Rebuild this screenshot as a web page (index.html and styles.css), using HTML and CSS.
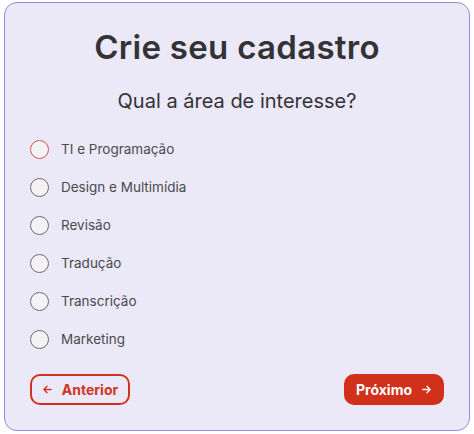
FILE: index.html
```html
<!DOCTYPE html>
<html lang="pt-BR">
<head>
<meta charset="utf-8">
<link rel="stylesheet" href="styles.css">
</head>
<body>
<main class="card">
  <h1 class="title">Crie seu cadastro</h1>
  <h2 class="subtitle">Qual a área de interesse?</h2>
  <ul class="options">
    <li class="option"><span class="radio radio-active"></span><span class="label">TI e Programação</span></li>
    <li class="option"><span class="radio"></span><span class="label">Design e Multimídia</span></li>
    <li class="option"><span class="radio"></span><span class="label">Revisão</span></li>
    <li class="option"><span class="radio"></span><span class="label">Tradução</span></li>
    <li class="option"><span class="radio"></span><span class="label">Transcrição</span></li>
    <li class="option"><span class="radio"></span><span class="label">Marketing</span></li>
  </ul>
  <div class="actions">
    <button class="btn btn-outline"><svg class="arrow" viewBox="0 0 12 12" width="11" height="11"><path d="M10 6H2M5.5 2.5L2 6l3.5 3.5" fill="none" stroke="currentColor" stroke-width="1.4" stroke-linecap="round" stroke-linejoin="round"/></svg>Anterior</button>
    <button class="btn btn-fill">Próximo<svg class="arrow" viewBox="0 0 12 12" width="11" height="11"><path d="M2 6h8M6.5 2.5L10 6l-3.5 3.5" fill="none" stroke="currentColor" stroke-width="1.4" stroke-linecap="round" stroke-linejoin="round"/></svg></button>
  </div>
</main>
</body>
</html>
```
FILE: styles.css
```css
* { box-sizing: border-box; }
html, body { margin: 0; padding: 0; background: #ffffff; }
body {
  font-family: Inter, "Noto Sans", "Liberation Sans", sans-serif;
  color: #3a3a3c;
  width: 474px;
  height: 434px;
  padding: 2px 4px 3px 4px;
}
.card {
  height: 429px;
  border: 1.5px solid #8f8ce0;
  border-radius: 13px;
  background: #ebe9f8;
  padding: 0 25px 0 25px;
  display: flex;
  flex-direction: column;
}
.title {
  margin: 26px 0 0 0;
  text-align: center;
  font-size: 33px;
  font-weight: 600;
  line-height: 36px;
  color: #333336;
  letter-spacing: 0.3px;
}
.subtitle {
  margin: 24px 0 0 0;
  text-align: center;
  font-size: 20px;
  font-weight: 400;
  line-height: 24px;
  color: #333336;
}
.options {
  list-style: none;
  margin: 26px 0 0 0;
  padding: 0;
  display: flex;
  flex-direction: column;
  gap: 18px;
}
.option {
  display: flex;
  align-items: center;
  gap: 12px;
  height: 20px;
}
.radio {
  width: 19px;
  height: 19px;
  border-radius: 50%;
  border: 1.5px solid #6d6b70;
  background: #f4f2f5;
  flex: none;
}
.radio-active { border-color: #d6544a; }
.label {
  font-size: 13.5px;
  color: #4a4a4d;
}
.actions {
  margin-top: 25px;
  display: flex;
  justify-content: space-between;
}
.btn {
  height: 31px;
  border-radius: 10px;
  font-family: inherit;
  font-size: 14px;
  font-weight: 700;
  display: flex;
  align-items: center;
  justify-content: center;
  gap: 9px;
  width: 100px;
  padding: 0;
  cursor: pointer;
}
.btn-outline {
  background: transparent;
  border: 2px solid #d2321f;
  color: #d2321f;
}
.btn-fill {
  background: #d1301a;
  border: 2px solid #d1301a;
  color: #ffffff;
}
.arrow { flex: none; }
```
